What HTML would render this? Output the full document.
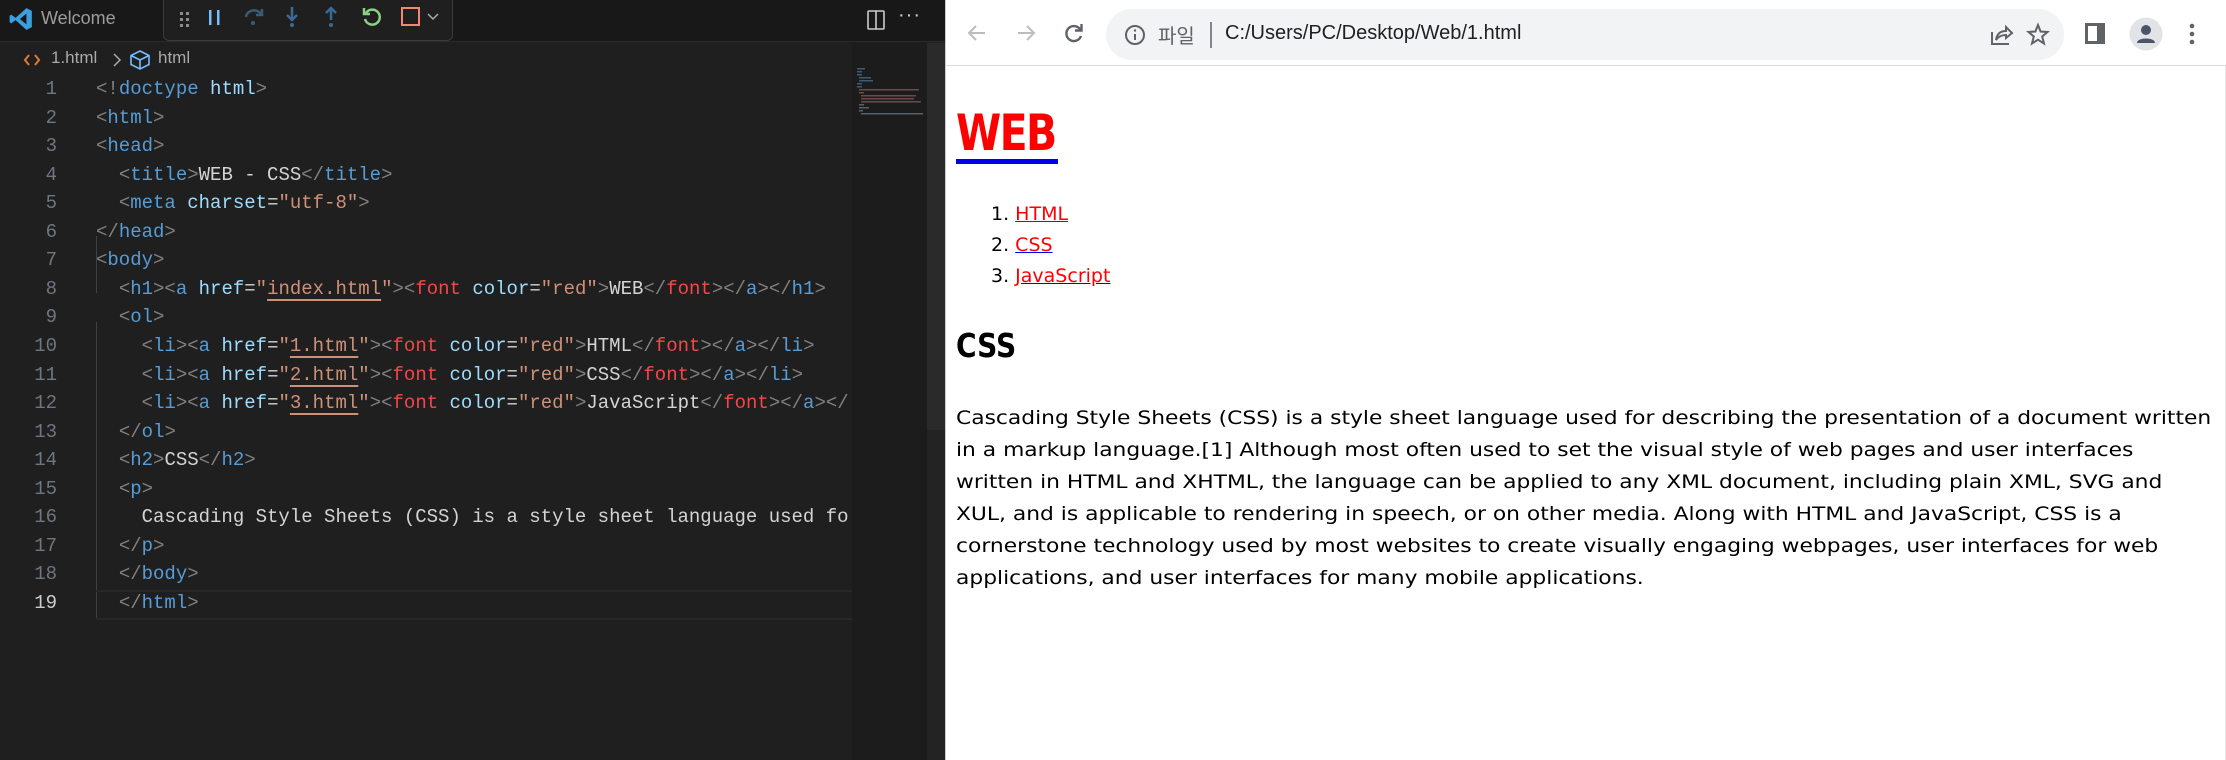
<!DOCTYPE html>
<html><head><meta charset="utf-8">
<style>
*{margin:0;padding:0;box-sizing:border-box}
body{width:2226px;height:760px;overflow:hidden;position:relative;background:#fff;font-family:"Liberation Sans",sans-serif}
#vs{position:absolute;left:0;top:0;width:945px;height:760px;background:#1f1f1f}
#title{position:absolute;left:0;top:0;width:945px;height:42px;background:#181818;border-bottom:1px solid #2b2b2b}
.abs{position:absolute}
#dbg{position:absolute;left:163px;top:-1px;width:290px;height:42px;background:#1f1f1f;border:1px solid #3a3a3a;border-radius:0 0 6px 6px}
#crumb{position:absolute;top:48px;left:0;height:24px;color:#a9a9a9;font-size:17px}
.code{position:absolute;left:0;top:75px;width:852px;font-family:"Liberation Mono",monospace;font-size:19px}
.ln{position:absolute;height:28.55px;line-height:28.55px;white-space:pre;width:852px}
.num{position:absolute;left:0;width:57px;text-align:right;color:#6e7681}
.tx{position:absolute;left:96px;color:#d4d4d4}
.b{color:#808080}.t{color:#569cd6}.a{color:#9cdcfe}.s{color:#ce9178}.f{color:#f44747}.w{color:#d4d4d4}
.u{text-decoration:underline;text-decoration-color:#ce9178;text-underline-offset:5px;text-decoration-thickness:2px}
.guide{position:absolute;left:96px;width:1px;background:#404040}
#br{position:absolute;left:945px;top:0;width:1281px;height:760px;background:#fff;border-left:1px solid #ccc}
#tb{position:absolute;left:0;top:0;width:1281px;height:66px;background:#fff;border-bottom:1px solid #dadce0}
#pill{position:absolute;left:160px;top:9px;width:958px;height:51px;background:#f1f3f4;border-radius:26px}
.page{position:absolute;font-family:"DejaVu Sans",sans-serif;color:#000}
.pl{position:absolute;left:10px;white-space:nowrap;font-size:19px;line-height:32px}
.para .pl{transform:scaleX(1.147);transform-origin:left}
a{color:#0000ee}
font[color=red]{color:red}
</style></head><body>
<div id="vs">
 <div id="title">
  <svg class="abs" style="left:8px;top:6px" width="26" height="26" viewBox="0 0 24 24"><path d="M17 2 L22 4.5 V19.5 L17 22 L7 13 L3 16 L1.5 15 V9 L3 8 L7 11 L17 2Z M17 7 L11 12 L17 17Z" fill="#3b9ede"/></svg>
  <div class="abs" style="left:41px;top:8px;color:#9d9d9d;font-size:18px">Welcome</div>
  <div id="dbg">
   <svg class="abs" style="left:14px;top:10px" width="14" height="20"><g fill="#8b8b8b"><rect x="2" y="2" width="3" height="3"/><rect x="8" y="2" width="3" height="3"/><rect x="2" y="8" width="3" height="3"/><rect x="8" y="8" width="3" height="3"/><rect x="2" y="14" width="3" height="3"/><rect x="8" y="14" width="3" height="3"/></g></svg>
   <svg class="abs" style="left:41px;top:7px" width="20" height="22"><rect x="4" y="3" width="2.5" height="15" fill="#75beff"/><rect x="12" y="3" width="2.5" height="15" fill="#75beff"/></svg>
   <svg class="abs" style="left:78px;top:5px" width="24" height="24" fill="none" stroke="#3a5a78" stroke-width="2.5"><path d="M4 12 A8 7 0 0 1 19 9"/><path d="M20 4 V10 H14"/><circle cx="11" cy="18" r="2" fill="#3a5a78" stroke="none"/></svg>
   <svg class="abs" style="left:118px;top:5px" width="20" height="24" fill="none" stroke="#3a6a94" stroke-width="2.5"><path d="M10 2 V14 M5 10 L10 15 L15 10"/><circle cx="10" cy="20" r="2" fill="#3a6a94" stroke="none"/></svg>
   <svg class="abs" style="left:157px;top:5px" width="20" height="24" fill="none" stroke="#3a6a94" stroke-width="2.5"><path d="M10 15 V3 M5 8 L10 3 L15 8"/><circle cx="10" cy="20" r="2" fill="#3a6a94" stroke="none"/></svg>
   <svg class="abs" style="left:196px;top:5px" width="24" height="24" fill="none" stroke="#89d185" stroke-width="2.5"><path d="M6 8 A7.5 7.5 0 1 1 5 14"/><path d="M4 3 V9 H10"/></svg>
   <svg class="abs" style="left:236px;top:6px" width="22" height="22"><rect x="2" y="2" width="17" height="17" fill="none" stroke="#f48771" stroke-width="2"/></svg>
   <svg class="abs" style="left:263px;top:12px" width="12" height="10" fill="none" stroke="#aaa" stroke-width="1.5"><path d="M1 2 L6 7 L11 2"/></svg>
  </div>
  <svg class="abs" style="left:866px;top:9px" width="20" height="22" fill="none" stroke="#ccc" stroke-width="1.6"><rect x="2" y="2" width="16" height="18" rx="1"/><path d="M10 2 V20"/></svg>
  <div class="abs" style="left:898px;top:4px;color:#ccc;font-size:20px;letter-spacing:1px">···</div>
 </div>
 <div id="crumb">
  <svg class="abs" style="left:23px;top:4px" width="18" height="16" fill="none" stroke="#e37933" stroke-width="2"><path d="M6 3 L2 8 L6 13 M12 3 L16 8 L12 13"/></svg>
  <span class="abs" style="left:51px;top:0">1.html</span>
  <svg class="abs" style="left:112px;top:4px" width="10" height="16" fill="none" stroke="#a9a9a9" stroke-width="1.5"><path d="M2 2 L8 8 L2 14"/></svg>
  <svg class="abs" style="left:129px;top:1px" width="22" height="22" fill="none" stroke="#75beff" stroke-width="1.6"><path d="M11 2 L20 6.5 V15.5 L11 20 L2 15.5 V6.5Z M2 6.5 L11 11 L20 6.5 M11 11 V20"/></svg>
  <span class="abs" style="left:158px;top:0">html</span>
 </div>
 <div class="guide" style="top:236px;height:57px"></div>
 <div class="guide" style="top:322px;height:297px"></div>
 <div class="abs" style="left:96px;top:590px;width:756px;height:30px;border-top:2px solid #282828;border-bottom:2px solid #282828"></div>
 <div class="code">
  <div class="ln" style="top:0"><span class="num">1</span><span class="tx"><span class="b">&lt;!</span><span class="t">doctype</span> <span class="a">html</span><span class="b">&gt;</span></span></div>
  <div class="ln" style="top:28.55px"><span class="num">2</span><span class="tx"><span class="b">&lt;</span><span class="t">html</span><span class="b">&gt;</span></span></div>
  <div class="ln" style="top:57.1px"><span class="num">3</span><span class="tx"><span class="b">&lt;</span><span class="t">head</span><span class="b">&gt;</span></span></div>
  <div class="ln" style="top:85.65px"><span class="num">4</span><span class="tx">  <span class="b">&lt;</span><span class="t">title</span><span class="b">&gt;</span>WEB - CSS<span class="b">&lt;/</span><span class="t">title</span><span class="b">&gt;</span></span></div>
  <div class="ln" style="top:114.2px"><span class="num">5</span><span class="tx">  <span class="b">&lt;</span><span class="t">meta</span> <span class="a">charset</span>=<span class="s">"utf-8"</span><span class="b">&gt;</span></span></div>
  <div class="ln" style="top:142.75px"><span class="num">6</span><span class="tx"><span class="b">&lt;/</span><span class="t">head</span><span class="b">&gt;</span></span></div>
  <div class="ln" style="top:171.3px"><span class="num">7</span><span class="tx"><span class="b">&lt;</span><span class="t">body</span><span class="b">&gt;</span></span></div>
  <div class="ln" style="top:199.85px"><span class="num">8</span><span class="tx">  <span class="b">&lt;</span><span class="t">h1</span><span class="b">&gt;&lt;</span><span class="t">a</span> <span class="a">href</span>=<span class="s">"<span class="u">index.html</span>"</span><span class="b">&gt;&lt;</span><span class="f">font</span> <span class="a">color</span>=<span class="s">"red"</span><span class="b">&gt;</span>WEB<span class="b">&lt;/</span><span class="f">font</span><span class="b">&gt;&lt;/</span><span class="t">a</span><span class="b">&gt;&lt;/</span><span class="t">h1</span><span class="b">&gt;</span></span></div>
  <div class="ln" style="top:228.4px"><span class="num">9</span><span class="tx">  <span class="b">&lt;</span><span class="t">ol</span><span class="b">&gt;</span></span></div>
  <div class="ln" style="top:256.95px"><span class="num">10</span><span class="tx">    <span class="b">&lt;</span><span class="t">li</span><span class="b">&gt;&lt;</span><span class="t">a</span> <span class="a">href</span>=<span class="s">"<span class="u">1.html</span>"</span><span class="b">&gt;&lt;</span><span class="f">font</span> <span class="a">color</span>=<span class="s">"red"</span><span class="b">&gt;</span>HTML<span class="b">&lt;/</span><span class="f">font</span><span class="b">&gt;&lt;/</span><span class="t">a</span><span class="b">&gt;&lt;/</span><span class="t">li</span><span class="b">&gt;</span></span></div>
  <div class="ln" style="top:285.5px"><span class="num">11</span><span class="tx">    <span class="b">&lt;</span><span class="t">li</span><span class="b">&gt;&lt;</span><span class="t">a</span> <span class="a">href</span>=<span class="s">"<span class="u">2.html</span>"</span><span class="b">&gt;&lt;</span><span class="f">font</span> <span class="a">color</span>=<span class="s">"red"</span><span class="b">&gt;</span>CSS<span class="b">&lt;/</span><span class="f">font</span><span class="b">&gt;&lt;/</span><span class="t">a</span><span class="b">&gt;&lt;/</span><span class="t">li</span><span class="b">&gt;</span></span></div>
  <div class="ln" style="top:314.05px;overflow:hidden;width:850px"><span class="num">12</span><span class="tx">    <span class="b">&lt;</span><span class="t">li</span><span class="b">&gt;&lt;</span><span class="t">a</span> <span class="a">href</span>=<span class="s">"<span class="u">3.html</span>"</span><span class="b">&gt;&lt;</span><span class="f">font</span> <span class="a">color</span>=<span class="s">"red"</span><span class="b">&gt;</span>JavaScript<span class="b">&lt;/</span><span class="f">font</span><span class="b">&gt;&lt;/</span><span class="t">a</span><span class="b">&gt;&lt;/</span><span class="t">li</span><span class="b">&gt;</span></span></div>
  <div class="ln" style="top:342.6px"><span class="num">13</span><span class="tx">  <span class="b">&lt;/</span><span class="t">ol</span><span class="b">&gt;</span></span></div>
  <div class="ln" style="top:371.15px"><span class="num">14</span><span class="tx">  <span class="b">&lt;</span><span class="t">h2</span><span class="b">&gt;</span>CSS<span class="b">&lt;/</span><span class="t">h2</span><span class="b">&gt;</span></span></div>
  <div class="ln" style="top:399.7px"><span class="num">15</span><span class="tx">  <span class="b">&lt;</span><span class="t">p</span><span class="b">&gt;</span></span></div>
  <div class="ln" style="top:428.25px;overflow:hidden;width:850px"><span class="num">16</span><span class="tx">    Cascading Style Sheets (CSS) is a style sheet language used for describing</span></div>
  <div class="ln" style="top:456.8px"><span class="num">17</span><span class="tx">  <span class="b">&lt;/</span><span class="t">p</span><span class="b">&gt;</span></span></div>
  <div class="ln" style="top:485.35px"><span class="num">18</span><span class="tx">  <span class="b">&lt;/</span><span class="t">body</span><span class="b">&gt;</span></span></div>
  <div class="ln" style="top:513.9px"><span class="num" style="color:#ccc">19</span><span class="tx">  <span class="b">&lt;/</span><span class="t">html</span><span class="b">&gt;</span></span></div>
 </div>
 <div class="abs" style="left:852px;top:43px;width:75px;height:717px;background:#1c1c1c"></div>
 <svg class="abs" style="left:857px;top:68px" width="70" height="50"><g fill="#3f5a74"><rect x="0" y="0" width="8" height="1.5"/><rect x="0" y="3" width="5" height="1.5"/><rect x="0" y="6" width="5" height="1.5"/><rect x="2" y="9" width="12" height="1.5"/><rect x="2" y="12" width="14" height="1.5"/><rect x="0" y="15" width="5" height="1.5"/><rect x="0" y="18" width="5" height="1.5"/></g><g fill="#6a4a4a"><rect x="2" y="21" width="60" height="1.5"/><rect x="2" y="24" width="5" height="1.5"/><rect x="4" y="27" width="55" height="1.5"/><rect x="4" y="30" width="53" height="1.5"/><rect x="4" y="33" width="60" height="1.5"/></g><g fill="#55606a"><rect x="2" y="36" width="5" height="1.5"/><rect x="2" y="39" width="10" height="1.5"/><rect x="2" y="42" width="4" height="1.5"/><rect x="4" y="45" width="62" height="1.5"/></g></svg>
 <div class="abs" style="left:927px;top:43px;width:18px;height:717px;background:#232323"></div>
 <div class="abs" style="left:927px;top:43px;width:18px;height:387px;background:#2a2a2a"></div>
</div>
<div id="br">
 <div class="abs" style="left:375px;top:0;width:900px;height:3px;background:#dee1e6"></div>
 <div id="tb">
  <svg class="abs" style="left:19px;top:21px" width="24" height="24" fill="none" stroke="#bdbdbd" stroke-width="2"><path d="M20 12 H4 M11 5 L4 12 L11 19"/></svg>
  <svg class="abs" style="left:68px;top:21px" width="24" height="24" fill="none" stroke="#bdbdbd" stroke-width="2"><path d="M4 12 H20 M13 5 L20 12 L13 19"/></svg>
  <svg class="abs" style="left:116px;top:21px" width="24" height="24" fill="none" stroke="#5f6368" stroke-width="2.4"><path d="M18.5 9 A7.5 7.5 0 1 0 19 15"/><path d="M19.5 3 V9.5 H13" /></svg>
  <div id="pill">
   <svg class="abs" style="left:17px;top:14px" width="24" height="24" fill="none" stroke="#5f6368" stroke-width="2"><circle cx="12" cy="12" r="9"/><path d="M12 11 V17"/><circle cx="12" cy="7.5" r="1.2" fill="#5f6368" stroke="none"/></svg>
   <div class="abs" style="left:52px;top:11px;font-family:'Noto Sans CJK KR',sans-serif;font-size:20px;color:#5f6368">파일</div>
   <div class="abs" style="left:104px;top:13px;width:2px;height:26px;background:#80868b"></div>
   <div class="abs" style="left:119px;top:13px;font-size:20px;color:#202124">C:/Users/PC/Desktop/Web/1.html</div>
   <svg class="abs" style="left:883px;top:13px" width="26" height="26" fill="none" stroke="#5f6368" stroke-width="2"><path d="M3 10 V22 H20"/><path d="M7 18 C8 11 12 9 17 9 V5 L23 11 L17 16 V13 C13 13 10 14 7 18Z"/></svg>
   <svg class="abs" style="left:919px;top:13px" width="26" height="26" fill="none" stroke="#5f6368" stroke-width="2"><path d="M13 3 L15.6 9.5 L22.5 10 L17.2 14.5 L19 21.5 L13 17.7 L7 21.5 L8.8 14.5 L3.5 10 L10.4 9.5Z"/></svg>
  </div>
  <svg class="abs" style="left:1138px;top:22px" width="24" height="24"><rect x="1" y="1" width="20" height="21" fill="#5f6368"/><rect x="4" y="4" width="9" height="15" fill="#fff"/></svg>
  <svg class="abs" style="left:1183px;top:17px" width="34" height="34"><circle cx="17" cy="17" r="16.5" fill="#e1e3e6"/><circle cx="17" cy="13" r="5" fill="#4a5568"/><path d="M8 26 C8 20 26 20 26 26Z" fill="#4a5568"/></svg>
  <svg class="abs" style="left:1242px;top:22px" width="8" height="24" fill="#5f6368"><circle cx="4" cy="4" r="2.3"/><circle cx="4" cy="12" r="2.3"/><circle cx="4" cy="20" r="2.3"/></svg>
 </div>
 <div class="abs" style="left:1279px;top:66px;width:2px;height:694px;background:#e6e6e6"></div>
 <div class="page" style="left:0;top:103px;font-size:50px;font-weight:bold;line-height:60px"><a href="#"><font color="red"><span style="display:inline-block;transform:scaleX(0.82);transform-origin:left;letter-spacing:-2px;margin-left:10px">WEB</span></font></a></div>
 <div class="abs" style="left:10px;top:159px;width:102px;height:5px;background:#0000ee"></div>
 <div class="page" style="left:0;top:198px;font-size:19px;line-height:31px">
  <div class="pl" style="top:0;left:45px">1. <a href="#" style="text-decoration-color:#551a8b"><font color="red">HTML</font></a></div>
  <div class="pl" style="top:31px;left:45px">2. <a href="#"><font color="red">CSS</font></a></div>
  <div class="pl" style="top:62px;left:45px">3. <a href="#"><font color="red">JavaScript</font></a></div>
 </div>
 <div class="page" style="left:10px;top:324px;font-size:33px;font-weight:bold;line-height:44px"><span style="display:inline-block;transform:scaleX(0.85);transform-origin:left">CSS</span></div>
 <div class="page para" style="left:0;top:402px;width:1281px;height:220px">
  <div class="pl" style="top:0">Cascading Style Sheets (CSS) is a style sheet language used for describing the presentation of a document written</div>
  <div class="pl" style="top:32px">in a markup language.[1] Although most often used to set the visual style of web pages and user interfaces</div>
  <div class="pl" style="top:64px">written in HTML and XHTML, the language can be applied to any XML document, including plain XML, SVG and</div>
  <div class="pl" style="top:96px">XUL, and is applicable to rendering in speech, or on other media. Along with HTML and JavaScript, CSS is a</div>
  <div class="pl" style="top:128px">cornerstone technology used by most websites to create visually engaging webpages, user interfaces for web</div>
  <div class="pl" style="top:160px">applications, and user interfaces for many mobile applications.</div>
 </div>
</div>
</body></html>
